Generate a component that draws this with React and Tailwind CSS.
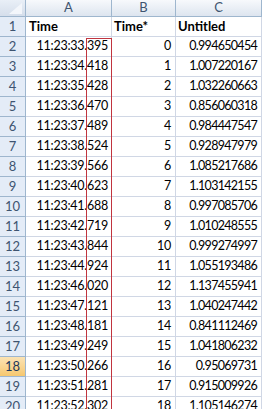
import React from 'react';

const rows = [
  ['11:23:33.395', '0', '0.994650454'],
  ['11:23:34.418', '1', '1.007220167'],
  ['11:23:35.428', '2', '1.032260663'],
  ['11:23:36.470', '3', '0.856060318'],
  ['11:23:37.489', '4', '0.984447547'],
  ['11:23:38.524', '5', '0.928947979'],
  ['11:23:39.566', '6', '1.085217686'],
  ['11:23:40.623', '7', '1.103142155'],
  ['11:23:41.688', '8', '0.997085706'],
  ['11:23:42.719', '9', '1.010248555'],
  ['11:23:43.844', '10', '0.999274997'],
  ['11:23:44.924', '11', '1.055193486'],
  ['11:23:46.020', '12', '1.137455941'],
  ['11:23:47.121', '13', '1.040247442'],
  ['11:23:48.181', '14', '0.841112469'],
  ['11:23:49.249', '15', '1.041806232'],
  ['11:23:50.266', '16', '0.95069731'],
  ['11:23:51.281', '17', '0.915009926'],
  ['11:23:52.302', '18', '1.105146274'],
];

const cols = 'grid grid-cols-[26px_86px_64px_86px]';
const cell = 'h-[20px] box-border border-r border-b border-[#d0d7e5] flex items-center text-[12.5px]';

function RowHead({ n, active }){
  return (
    <div className={`${cell} justify-center border-r-[#9eb6ce] border-b-[#9eb6ce] !text-[13px] ${active ? 'bg-gradient-to-b from-[#fbe3b4] to-[#f6c76e] text-[#1e395b]' : 'bg-[#e4ecf7] text-[#3e5470]'}`}>{n}</div>
  );
}

export default function App(){
  return (
    <div className="relative w-[262px] h-[409px] overflow-hidden bg-white text-black" style={{ fontFamily: 'Lato, "Open Sans", sans-serif' }}>
      <div className={cols}>
        <div className="h-[17px] box-border border-r border-b border-[#9eb6ce] bg-gradient-to-b from-[#e9eff7] to-[#d5deeb] relative overflow-hidden">
          <div className="absolute right-[3px] bottom-[2px] w-0 h-0 border-l-[13px] border-l-transparent border-b-[11px] border-b-[#f3f6fb]" />
        </div>
        {['A', 'B', 'C'].map(c => (
          <div key={c} className="h-[17px] box-border border-r border-b border-[#9eb6ce] bg-gradient-to-b from-[#f7f9fc] to-[#dde5ef] flex items-center justify-center text-[13px] text-[#3e5470]">{c}</div>
        ))}
        <RowHead n={1} />
        <div className={`${cell} pl-[3px] font-bold text-[13px]`}>Time</div>
        <div className={`${cell} pl-[2px] font-bold text-[13px]`}>Time*</div>
        <div className={`${cell} pl-[2px] font-bold text-[13px]`}>Untitled</div>
        {rows.map((r, i) => (
          <React.Fragment key={i}>
            <RowHead n={i + 2} active={i + 2 === 18} />
            <div className={`${cell} justify-end pr-[3px] tracking-[-0.25px]`}>{r[0]}</div>
            <div className={`${cell} justify-end pr-[4px] tracking-[-0.3px]`}>{r[1]}</div>
            <div className={`${cell} justify-end pr-[4px] tracking-[-0.7px]`}>{r[2]}</div>
          </React.Fragment>
        ))}
      </div>
      <div className="absolute left-[86px] top-[38px] w-[26px] h-[380px] border border-[#c0343f]" />
    </div>
  );
}
